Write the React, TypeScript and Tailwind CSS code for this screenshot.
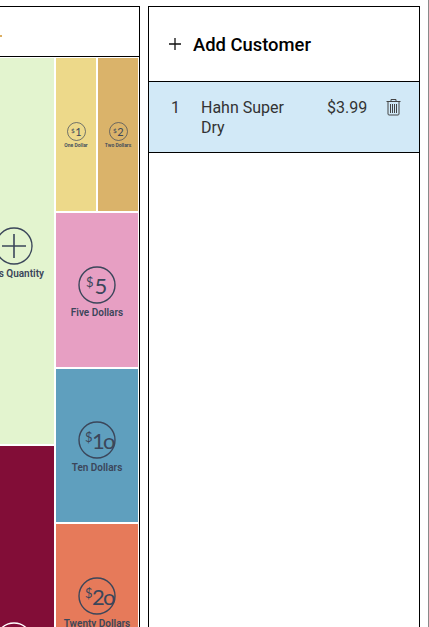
import React from "react";

const ink = "#3b465a";
const font = { fontFamily: '"Roboto", sans-serif' };

function Money({ size, num, stroke = ink }: { size: number; num: string; stroke?: string }) {
  const wide = num.length > 1;
  return (
    <svg width={size} height={size} viewBox="0 0 38 38" className="shrink-0">
      <circle cx="19" cy="19" r="18" fill="none" stroke={stroke} strokeWidth="1.4" />
      <text x={wide ? "7" : "8"} y="21" fontSize="13" fill={stroke} style={{ fontFamily: "Lato, sans-serif" }}>$</text>
      <text x={wide ? "14" : "16.5"} y="27.5" fontSize="22" letterSpacing={wide ? "-1.8" : "0"} fill={stroke} style={{ fontFamily: "Lato, sans-serif" }}>{num}</text>
    </svg>
  );
}

function Plus({ stroke = ink, size = 38 }: { stroke?: string; size?: number }) {
  return (
    <svg width={size} height={size} viewBox="0 0 38 38" className="shrink-0">
      <circle cx="19" cy="19" r="18" fill="none" stroke={stroke} strokeWidth="1.4" />
      <path d="M19 7V31M7 19H31" stroke={stroke} strokeWidth="1.6" fill="none" />
    </svg>
  );
}

function Tile({ cls, label, small, children }: { cls: string; label: string; small?: boolean; children: React.ReactNode }) {
  return (
    <div className={`flex flex-col items-center justify-center overflow-hidden ${small ? "pt-[3px]" : "pt-[6px]"} ${cls}`}>
      {children}
      <span
        className={small ? "mt-[1px] whitespace-nowrap text-[5px] leading-[7px] font-semibold text-[#3b465a]" : "mt-[2px] whitespace-nowrap text-[10px] leading-[14px] font-semibold text-[#3b465a]"}
      >
        {label}
      </span>
    </div>
  );
}

export default function App() {
  return (
    <div className="flex h-[627px] w-[429px] overflow-hidden bg-white pt-[6px] border-r border-[#8a8a8a]" style={font}>
      <div className="ml-[-28px] flex w-[168px] shrink-0 flex-col border border-b-0 border-black">
        <div className="flex h-[50px] shrink-0 items-center border-b border-black pl-[25px]">
          <span className="mt-[8px] h-[2px] w-[4px] bg-[#dcae62]" />
        </div>
        <div className="flex gap-[2px] pl-[1px] pt-[0.67px]">
          <div className="flex w-[80px] shrink-0 flex-col gap-[2px]">
            <Tile cls="h-[386.5px] shrink-0 bg-[#e3f4cf]" label="Plus Quantity"><Plus /></Tile>
            <Tile cls="h-[386.5px] shrink-0 bg-[#820d37]" label=""><Plus stroke="#ffffff" /></Tile>
          </div>
          <div className="flex w-[82px] shrink-0 flex-col gap-[2px]">
            <div className="flex h-[153.5px] shrink-0 gap-[2px]">
              <Tile small cls="w-[40px] bg-[#edd98a]" label="One Dollar"><Money size={19} num="1" /></Tile>
              <Tile small cls="w-[40px] bg-[#dab36a]" label="Two Dollars"><Money size={19} num="2" /></Tile>
            </div>
            <Tile cls="h-[153.5px] shrink-0 bg-[#e79fc3]" label="Five Dollars"><Money size={38} num="5" /></Tile>
            <Tile cls="h-[153.5px] shrink-0 bg-[#5f9fbe]" label="Ten Dollars"><Money size={38} num="1o" /></Tile>
            <Tile cls="h-[153.5px] shrink-0 bg-[#e67a5a]" label="Twenty Dollars"><Money size={38} num="2o" /></Tile>
          </div>
        </div>
      </div>

      <div className="ml-[8px] flex w-[272px] shrink-0 flex-col border border-b-0 border-black">
        <div className="flex h-[75px] shrink-0 items-center gap-[11px] border-b border-black pl-[19px]">
          <svg width="14" height="14" viewBox="0 0 14 14">
            <path d="M7 1V13M1 7H13" stroke="#111" strokeWidth="1.3" fill="none" />
          </svg>
          <span className="pt-[1px] text-[18.4px] leading-[24px] font-medium text-black">Add Customer</span>
        </div>
        <div className="flex h-[71px] shrink-0 items-start border-b border-black bg-[#d2e9f7] pt-[16px] text-[16px] leading-[19.5px] text-[#333]">
          <span className="ml-[22px] w-[30px]">1</span>
          <span className="w-[126px]">Hahn Super<br />Dry</span>
          <span className="w-[59px]">$3.99</span>
          <svg width="15" height="18" viewBox="0 0 15 18" fill="none" stroke="#444" strokeWidth="1">
            <path d="M0.5 3.5H14.5M5 3.5V1.5H10V3.5M2 3.5V16C2 16.6 2.4 17 3 17H12C12.6 17 13 16.6 13 16V3.5" />
            <path d="M4.5 6V15M6.5 6V15M8.5 6V15M10.5 6V15" />
          </svg>
        </div>
      </div>
    </div>
  );
}
